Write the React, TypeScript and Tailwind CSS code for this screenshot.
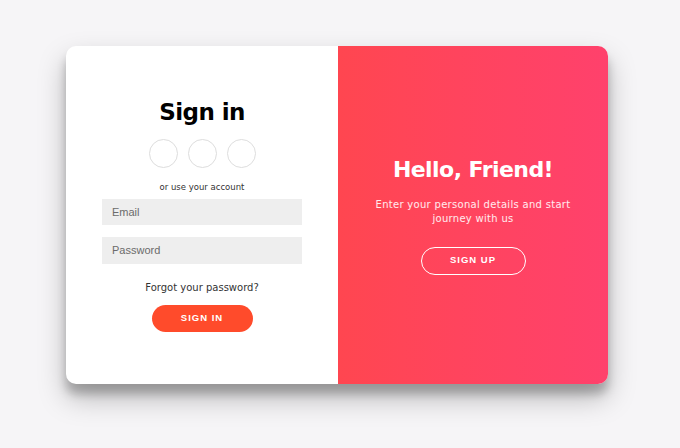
export default function App() {
  return (
    <div className="flex h-[448px] w-[680px] items-center justify-center bg-[#f6f5f7] pr-[6px] pb-[18px] font-['DejaVu_Sans',sans-serif]">
      <div className="flex h-[338px] w-[542px] overflow-hidden rounded-[10px] bg-white shadow-[0_14px_28px_rgba(0,0,0,0.25),0_10px_10px_rgba(0,0,0,0.22)]">
        {/* Sign in form */}
        <div className="flex w-[272px] flex-col items-center pt-[55px]">
          <h1 className="text-[23px] font-bold leading-none tracking-tight text-black">Sign in</h1>
          <div className="mt-[15px] flex gap-[10px]">
            <span className="h-[29px] w-[29px] rounded-full border border-[#dddddd]" />
            <span className="h-[29px] w-[29px] rounded-full border border-[#dddddd]" />
            <span className="h-[29px] w-[29px] rounded-full border border-[#dddddd]" />
          </div>
          <p className="mt-[13px] text-[8.5px] text-[#333]">or use your account</p>
          <input
            className="mt-[5px] h-[26px] w-[200px] bg-[#eeeeee] px-[10px] font-['Liberation_Sans',sans-serif] text-[11px] outline-none placeholder:text-[#6b6b6b]"
            placeholder="Email"
          />
          <input
            className="mt-[12px] h-[27px] w-[200px] bg-[#eeeeee] px-[10px] font-['Liberation_Sans',sans-serif] text-[11px] outline-none placeholder:text-[#6b6b6b]"
            placeholder="Password"
          />
          <a className="mt-[16px] text-[10px] text-[#333]">Forgot your password?</a>
          <button className="mt-[10px] h-[27px] w-[101px] rounded-full bg-[#ff4b2b] font-['Liberation_Sans',sans-serif] text-[9.5px] font-bold tracking-[1px] text-white">
            SIGN IN
          </button>
        </div>
        {/* Overlay panel */}
        <div className="flex flex-1 flex-col items-center justify-center bg-gradient-to-r from-[#ff4650] to-[#ff416c] pt-[3px] text-white">
          <h1 className="text-[22px] font-bold leading-none tracking-tight">Hello, Friend!</h1>
          <p className="mt-[17px] w-[210px] text-center text-[10px] leading-[14px] tracking-[0.3px] text-white/90">
            Enter your personal details and start journey with us
          </p>
          <button className="mt-[21px] h-[28px] w-[105px] rounded-full border border-white font-['Liberation_Sans',sans-serif] text-[9.5px] font-bold tracking-[1px]">
            SIGN UP
          </button>
        </div>
      </div>
    </div>
  );
}
